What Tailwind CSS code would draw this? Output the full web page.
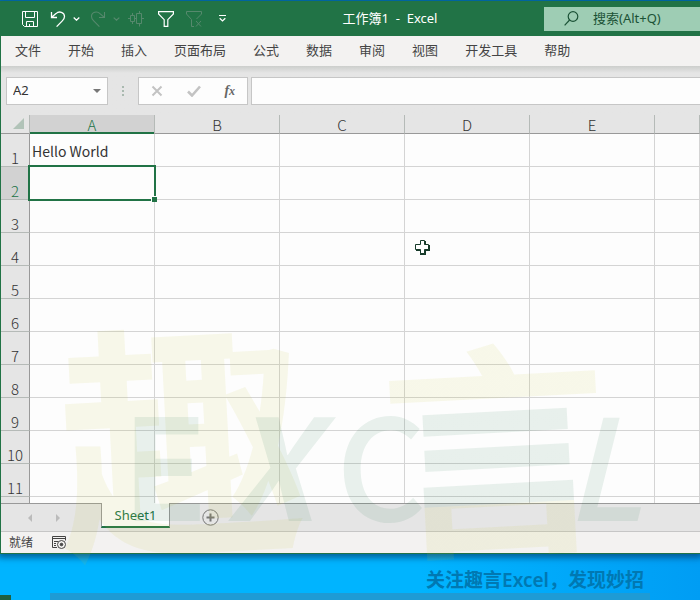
<!DOCTYPE html>
<html lang="zh-CN">
<head>
<meta charset="utf-8">
<title>工作簿1 - Excel</title>
<script src="https://cdn.jsdelivr.net/npm/@tailwindcss/browser@4"></script>
</head>
<body class="relative flex h-screen flex-col overflow-hidden bg-linear-to-r from-[#00b4ff] from-60% to-[#009df4] font-['Noto_Sans','Noto_Sans_CJK_SC',sans-serif] text-[13px] text-[#444]">
<div class="h-px shrink-0 bg-[#0078b8]"></div>
<main class="relative z-10 flex min-h-0 flex-1 flex-col border-b border-l border-[#217346] shadow-[0_2px_6px_2px_rgba(0,40,80,0.55)]">
  <header class="flex h-[35px] shrink-0 items-center bg-[#217346] pl-[15px] text-white">
    <div class="flex h-9 items-center">
      <button aria-label="保存" class="flex w-7 justify-center"><svg class="size-4" viewBox="0 0 16 16" fill="none" stroke="currentColor"><path d="M.5.5h15v15H2.5l-2-2zM3.5.5v6h9v-6M4.5 15.500v-5h7v5M7.500 15v-2"/></svg></button>
      <button aria-label="撤消" class="flex w-7 justify-center"><svg class="size-4" viewBox="0 0 16 16" fill="none" stroke="currentColor" stroke-width="1.300"><path d="M1.500 1v5.500H7M1.700 6.300 6 2.600C9-.3 14.500 1 14.500 5.500c0 2-1 3.200-2.200 4.400L6.600 15.600"/></svg></button>
      <button aria-label="撤消选项" class="flex w-2 justify-center"><svg class="h-1 w-[7px]" viewBox="0 0 7 4" fill="none" stroke="currentColor" stroke-width="1.300"><path d="m.7.6 2.800 2.600L6.300.6"/></svg></button>
      <button aria-label="恢复" class="ml-1 flex w-7 justify-center text-[#56896d]"><svg class="size-4" viewBox="0 0 16 16" fill="none" stroke="currentColor" stroke-width="1.100"><path d="M14.500 1v5.500H9M14.300 6.300 10 2.600C7-.3 1.500 1 1.500 5.500c0 2 1 3.200 2.200 4.400l5.700 5.700"/></svg></button>
      <button aria-label="恢复选项" class="flex w-2 justify-center text-[#56896d]"><svg class="h-1 w-[7px]" viewBox="0 0 7 4" fill="none" stroke="currentColor" stroke-width="1.200"><path d="m.7.6 2.800 2.600L6.300.6"/></svg></button>
      <button aria-label="对齐" class="ml-1 flex w-6 justify-center text-[#56896d]"><svg class="size-4" viewBox="0 0 16 16" fill="none" stroke="currentColor"><path d="M0 7.500h2.500M6.500 7.500h2M13.500 7.500H16M2.500 4.500h4v6h-4zM8.500 2.500h5v10h-5zM4.500 2v2M4.500 11v2M11.500 0v2M11.500 13v2.500"/></svg></button>
      <button aria-label="筛选" class="ml-1 flex w-7 justify-center"><svg class="size-4" viewBox="0 0 16 16" fill="none" stroke="currentColor" stroke-width="1.200"><path d="M.6.600h14.800V3L9.800 8.700v6.700H6.200V8.700L.6 3z"/></svg></button>
      <button aria-label="清除筛选" class="flex w-7 justify-center text-[#56896d]"><svg class="size-4" viewBox="0 0 16 16" fill="none" stroke="currentColor"><path d="M8 15.500H5.500V8.500L.5 3V.500h15V3L10.500 8M10 10l5 5.500M15 10l-5 5.500"/></svg></button>
      <button aria-label="自定义快速访问工具栏" class="flex w-7 justify-center"><svg class="h-[7px] w-[7px]" viewBox="0 0 7 7" fill="none" stroke="currentColor"><path d="M0 .500h7"/><path d="m.7 3.300 2.800 2.600 2.800-2.600" stroke-width="1.300"/></svg></button>
    </div>
    <h1 class="flex-1 whitespace-pre text-center text-[13px]">工作簿1  -  Excel</h1>
    <label class="flex h-6 w-[156px] items-center bg-[#9ecdb4] pl-5 text-[#1b5236]">
      <svg class="size-[15px] shrink-0" viewBox="0 0 15 15" fill="none" stroke="currentColor" stroke-width="1.200"><circle cx="9" cy="5.500" r="4.800"/><path d="M5.600 9 .6 14.300"/></svg>
      <input type="text" aria-label="搜索" placeholder="搜索(Alt+Q)" class="ml-3.5 w-full min-w-0 text-[13px] outline-none placeholder:text-[#1b5236]">
    </label>
  </header>

  <nav class="flex h-[30px] shrink-0 items-center gap-[27px] bg-[#f3f2f1] pl-3.5 whitespace-nowrap">
    <a href="#">文件</a><a href="#">开始</a><a href="#">插入</a><a href="#">页面布局</a><a href="#">公式</a><a href="#">数据</a><a href="#">审阅</a><a href="#">视图</a><a href="#">开发工具</a><a href="#">帮助</a>
  </nav>

  <section class="flex h-[49px] shrink-0 items-start bg-linear-to-b from-[#cccecc] to-[#e5e5e5] to-[7px] pt-[11px] pl-[5px]">
    <div class="flex h-7 w-[102px] items-center border border-[#c6c6c6] bg-[#fdfdfd] px-1.5">
      <input type="text" aria-label="名称框" value="A2" class="w-full min-w-0 text-[13px] text-[#333] outline-none">
      <svg class="h-1 w-2 shrink-0" viewBox="0 0 8 4" fill="#777"><path d="M0 0h8L4 4z"/></svg>
    </div>
    <svg class="mx-3.5 h-7 w-0.5" viewBox="0 0 2 28" fill="#a9b9af"><path d="M0 9h2v2H0zM0 13h2v2H0zM0 17h2v2H0z"/></svg>
    <div class="flex h-7 w-[110px] items-center justify-around border border-[#c6c6c6] bg-[#fdfdfd]">
      <button aria-label="取消"><svg class="size-3" viewBox="0 0 12 12" fill="none" stroke="#c3c3c3" stroke-width="2"><path d="m1.500 1.500 9 9M10.500 1.500l-9 9"/></svg></button>
      <button aria-label="输入"><svg class="h-3 w-[14px]" viewBox="0 0 14 12" fill="none" stroke="#c3c3c3" stroke-width="2.600"><path d="m1 6.500 4 4L13 1.500"/></svg></button>
      <button aria-label="插入函数" class="font-['Liberation_Serif',serif] text-sm leading-4 font-bold text-[#666] italic">f<span class="text-xs">x</span></button>
    </div>
    <input type="text" aria-label="编辑栏" class="ml-[3px] h-7 min-w-0 flex-1 border border-r-0 border-[#c6c6c6] bg-[#fdfdfd] px-2 outline-none">
  </section>

  <div class="min-h-0 flex-1 overflow-hidden bg-[#fdfdfd]">
    <table class="w-full table-fixed border-separate border-spacing-0 font-['Noto_Sans_CJK_SC',sans-serif] text-[15px] leading-4 text-[#333] [&_tbody_td]:border-r [&_tbody_td]:border-b [&_tbody_td]:border-[#d4d4d4] [&_tbody_th]:h-[33px] [&_tbody_th]:border-r [&_tbody_th]:border-b [&_tbody_th]:border-r-[#999] [&_tbody_th]:border-b-[#b5bab7] [&_tbody_th]:bg-[#e5e5e5] [&_tbody_th]:align-bottom [&_th]:p-0 [&_th]:font-light">
      <colgroup><col class="w-[29px]"><col class="w-[125px]"><col class="w-[125px]"><col class="w-[125px]"><col class="w-[125px]"><col class="w-[125px]"><col></colgroup>
      <thead class="bg-[#e5e5e5] [&_th]:h-[19px] [&_th]:border-r [&_th]:border-b [&_th]:border-r-[#b5bab7] [&_th]:border-b-[#999] [&_th]:align-bottom">
        <tr>
          <th><button aria-label="全选" class="ml-auto block w-4 pb-1"><svg class="size-[11px]" viewBox="0 0 11 11" fill="#b1c3b8"><path d="M11 0v11H0z"/></svg></button></th>
          <th scope="col" class="relative bg-[#d2d2d2] text-[#217346] after:absolute after:inset-x-0 after:-bottom-px after:h-0.5 after:bg-[#217346]">A</th>
          <th scope="col">B</th><th scope="col">C</th><th scope="col">D</th><th scope="col">E</th><th></th>
        </tr>
      </thead>
      <tbody>
        <tr><th scope="row">1</th><td class="px-0.5 pt-0.5 text-sm leading-4">Hello World</td><td></td><td></td><td></td><td></td><td></td></tr>
        <tr><th scope="row" class="bg-[#d2d2d2]! text-[#217346]">2</th><td class="relative"><div class="absolute -inset-0.5 border-2 border-[#217346]"></div><div class="absolute -right-[3px] -bottom-[3px] size-1.5 border-t border-l border-white bg-[#217346]"></div></td><td></td><td></td><td></td><td></td><td></td></tr>
        <tr><th scope="row">3</th><td></td><td></td><td></td><td></td><td></td><td></td></tr>
        <tr><th scope="row">4</th><td></td><td></td><td></td><td></td><td></td><td></td></tr>
        <tr><th scope="row">5</th><td></td><td></td><td></td><td></td><td></td><td></td></tr>
        <tr><th scope="row">6</th><td></td><td></td><td></td><td></td><td></td><td></td></tr>
        <tr><th scope="row">7</th><td></td><td></td><td></td><td></td><td></td><td></td></tr>
        <tr><th scope="row">8</th><td></td><td></td><td></td><td></td><td></td><td></td></tr>
        <tr><th scope="row">9</th><td></td><td></td><td></td><td></td><td></td><td></td></tr>
        <tr><th scope="row">10</th><td></td><td></td><td></td><td></td><td></td><td></td></tr>
        <tr><th scope="row">11</th><td></td><td></td><td></td><td></td><td></td><td></td></tr>
        <tr><th scope="row"></th><td></td><td></td><td></td><td></td><td></td><td></td></tr>
      </tbody>
    </table>
  </div>

  <div class="flex h-7 shrink-0 items-center border-t border-[#999] bg-[#e5e5e5]">
    <div class="flex w-[100px] gap-6 pl-[27px]">
      <button aria-label="上一个工作表"><svg class="h-2 w-1" viewBox="0 0 4 8" fill="#bbb"><path d="M4 0v8L0 4z"/></svg></button>
      <button aria-label="下一个工作表"><svg class="h-2 w-1" viewBox="0 0 4 8" fill="#bbb"><path d="M0 0v8l4-4z"/></svg></button>
    </div>
    <button class="-mt-px h-[25px] w-[69px] self-start border-x border-b-2 border-x-[#999] border-b-[#217346] bg-[#fdfdfd] text-[13px] leading-5 text-[#217346]">Sheet1</button>
    <button aria-label="新工作表" class="ml-8"><svg class="size-[17px]" viewBox="0 0 17 17" fill="none" stroke="#777"><circle cx="8.500" cy="8.500" r="7.700"/><path d="M8.500 4.500v8M4.500 8.500h8" stroke-width="2"/></svg></button>
  </div>
  <footer class="flex h-[22px] shrink-0 items-center gap-[19px] border-t border-[#c6c6c6] bg-[#f3f2f1] pl-2 text-xs">
    <span>就绪</span>
    <button aria-label="录制宏"><svg class="h-[13px] w-[14px]" viewBox="0 0 14 13" fill="none" stroke="#444"><path d="M5 11.500H.5V.500h13v4M.5 2.500h13M2 5.500h4M2 7.500h2M2 9.500h2"/><circle cx="9.500" cy="8.500" r="4"/><circle cx="9.500" cy="8.500" r="1.300" fill="#444"/></svg></button>
  </footer>
</main>

<div class="flex h-[46px] shrink-0 flex-col justify-between">
  <p class="mt-3.5 mr-14 text-right font-['Noto_Sans','Noto_Sans_CJK_SC',sans-serif] text-[19px] leading-6 font-semibold text-[#0078b2]">关注趣言Excel，发现妙招</p>
  <div class="flex h-[7px] items-end justify-between"><div class="h-[5px] w-[11px] bg-[#1f6040]"></div><div class="mr-[50px] ml-[39px] h-full flex-1 bg-[#1e9bd5]"></div></div>
</div>

<!-- Brand watermark laid over the window -->
<div aria-hidden="true" class="pointer-events-none absolute inset-0 z-20 font-['Noto_Sans_CJK_SC',sans-serif] font-bold">
  <span class="absolute top-[270px] left-[56px] -rotate-3 text-[248px] leading-[320px] text-[#c8c83c]/10">趣</span>
  <span class="absolute top-[284px] left-[382px] -rotate-3 bg-[linear-gradient(#c8c83c1a_41%,#146e4117_41%,#146e4117_71%,#c8c83c1a_71%)] bg-clip-text text-[226px] leading-[310px] text-transparent">言</span>
  <span class="absolute top-[360px] left-[122px] text-[140px] leading-[200px] text-[#146e41]/9">E</span>
  <span class="absolute top-[360px] left-[226px] text-[140px] leading-[200px] text-[#146e41]/9 italic">X</span>
  <span class="absolute top-[360px] left-[336px] text-[140px] leading-[200px] font-medium text-[#146e41]/9">C</span>
  <span class="absolute top-[360px] left-[564px] text-[140px] leading-[200px] font-medium text-[#146e41]/9 italic">L</span>
</div>

<!-- Cell pointer -->
<svg aria-hidden="true" class="pointer-events-none absolute top-60 left-[415px] z-30 size-[15px]" viewBox="0 0 15 15"><path d="M6 1h5v4h4v6h-4v4H5v-4H1V6h5z" fill="#173b2a"/><path d="M5.500.500h4v4h4v5h-4v4h-4v-4h-5v-5h5z" fill="#fff" stroke="#173b2a"/></svg>
</body>
</html>
